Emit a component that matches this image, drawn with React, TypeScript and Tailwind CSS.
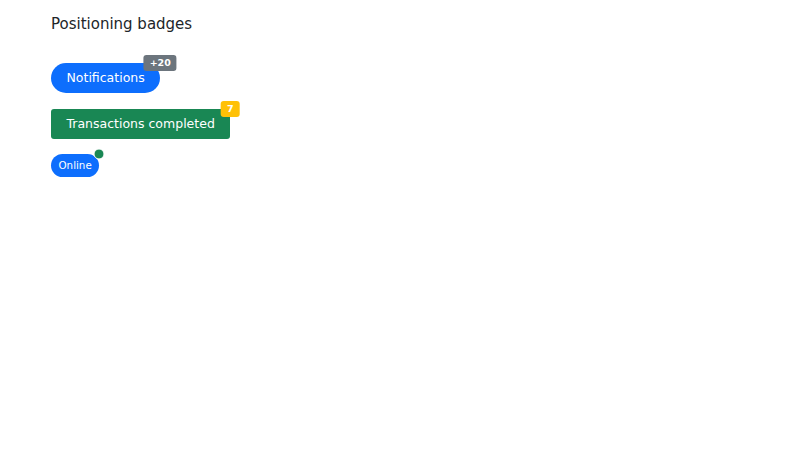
import React from "react";

export default function App() {
  const font = { fontFamily: '"DejaVu Sans", sans-serif' };
  return (
    <div className="w-[800px] h-[450px] bg-white pl-[51px] pt-[15px]" style={font}>
      <h5 className="text-[15px] leading-[18px] text-[#212529] font-normal m-0">Positioning badges</h5>
      <div className="mt-[30px] flex flex-col items-start gap-[15.5px]">
        <button className="relative bg-[#0d6efd] text-white text-[12.5px] leading-[18px] py-[6px] px-[15.5px] rounded-full">
          Notifications
          <span className="absolute top-0 left-full -translate-x-1/2 -translate-y-1/2 bg-[#6c757d] text-white text-[9.5px] font-bold leading-[16px] h-[16px] px-[6px] rounded-[3px]">
            +20
          </span>
        </button>
        <button className="relative bg-[#198754] text-white text-[12.5px] leading-[18px] py-[6px] px-[15.5px] rounded-[3px]">
          Transactions completed
          <span className="absolute top-0 left-full -translate-x-1/2 -translate-y-1/2 bg-[#ffc107] text-white text-[9.5px] font-bold leading-[16px] h-[16px] px-[6px] rounded-[3px]">
            7
          </span>
        </button>
        <button className="relative bg-[#0d6efd] text-white text-[10.3px] leading-[15px] py-[4px] px-[7.5px] rounded-full">
          Online
          <span className="absolute top-0 left-full -translate-x-1/2 -translate-y-1/2 bg-[#198754] border border-white w-[11px] h-[11px] rounded-full"></span>
        </button>
      </div>
    </div>
  );
}
